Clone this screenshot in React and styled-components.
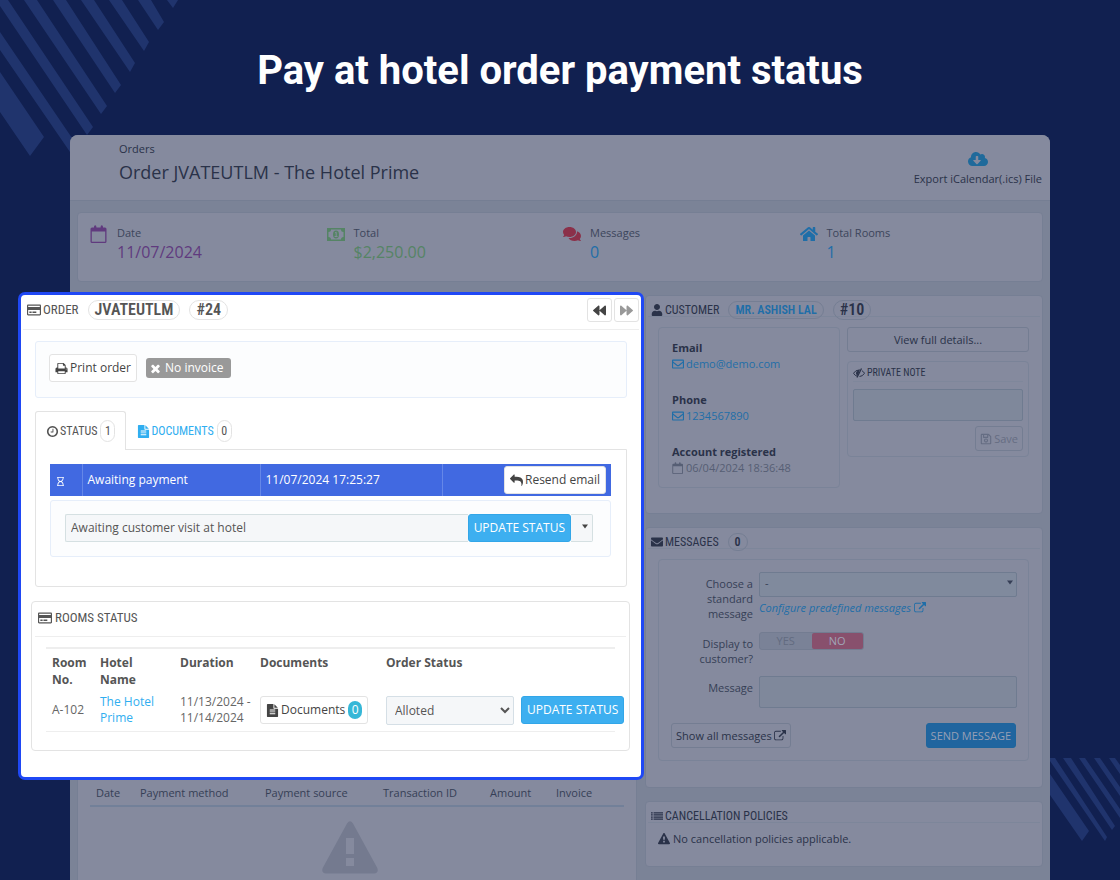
import React, { useState } from 'react';
import styled, { createGlobalStyle } from 'styled-components';
import {
  FaBackward,
  FaCloudDownloadAlt,
  FaComments,
  FaEnvelope,
  FaForward,
  FaHome,
  FaRegCreditCard,
  FaRegEnvelope,
  FaRegHourglass,
  FaRegSave,
  FaUser,
} from 'react-icons/fa';

const GlobalStyle = createGlobalStyle`
  * {
    box-sizing: border-box;
  }
  body {
    margin: 0;
    background: #112050;
    font-family: 'Open Sans', 'Noto Sans', sans-serif;
    font-size: 12px;
    line-height: 16px;
    color: #555;
  }
  button, input, select, textarea {
    font: inherit;
    margin: 0;
  }
  a {
    text-decoration: none;
  }
`;

const narrow = "'Ubuntu Condensed', 'Roboto Condensed', 'Liberation Sans Narrow', Roboto, sans-serif";

const Page = styled.div`
  position: relative;
  display: flex;
  flex-direction: column;
  min-height: 100vh;
  overflow: hidden;
`;

const Stripes = styled.svg`
  position: absolute;
  fill: #20346d;
  ${p => (p.$corner === 'top' ? 'top: 0; left: 0;' : 'bottom: 36px; right: 0;')}
`;

const Title = styled.h1`
  position: relative;
  margin: 0;
  height: 135px;
  padding-top: 47px;
  text-align: center;
  font-family: Roboto, sans-serif;
  font-size: 40px;
  line-height: 48px;
  font-weight: 700;
  color: #fff;
`;

const Shell = styled.main`
  position: relative;
  display: flex;
  flex-direction: column;
  flex: 1;
  margin: 0 70px;
  border-radius: 8px 8px 0 0;
  background: #7b8397;
  font-size: 11px;
  color: #363f56;
`;

const PageHead = styled.header`
  display: flex;
  justify-content: space-between;
  height: 66px;
  padding: 6px 8px 0 49px;
  border-bottom: 1px solid #757e93;
  border-radius: 8px 8px 0 0;
  background: #858a9e;
  color: #2a3249;
`;

const PageTitle = styled.h2`
  margin: 2px 0 0;
  font-size: 18px;
  line-height: 26px;
  font-weight: 400;
`;

const ExportLink = styled.a`
  display: flex;
  flex-direction: column;
  align-items: center;
  gap: 2px;
  padding-top: 8px;
  color: inherit;

  svg {
    font-size: 20px;
    color: #1f6a9b;
  }
`;

const Card = styled.section`
  border: 1px solid #767f94;
  border-radius: 4px;
  background: #858a9e;
`;

const Summary = styled(Card)`
  display: grid;
  grid-template-columns: repeat(4, 1fr);
  height: 70px;
  margin: 11px 7px 13px;
  padding: 12px 6px 0 12px;
`;

const Stat = styled.div`
  display: flex;
  gap: 9px;
  color: ${p => p.$color};

  > svg {
    width: 18px;
    height: 18px;
  }
`;

const StatLabel = styled.div`
  color: #3c455b;
`;

const StatValue = styled.div`
  font-size: 16px;
  line-height: 22px;
`;

const Columns = styled.div`
  display: grid;
  grid-template-columns: minmax(0, 1fr) 398px;
  gap: 8px;
  flex: 1;
  padding: 0 7px;
`;

const MainColumn = styled.div`
  display: flex;
  flex-direction: column;
`;

const SideColumn = styled.div`
  display: flex;
  flex-direction: column;
  gap: 13px;
`;

const CardHead = styled.h3`
  display: flex;
  align-items: center;
  height: 21px;
  margin: 0 2px;
  padding: 8px 0 0 3px;
  border-bottom: 1px solid #7d869a;
  font-family: ${narrow};
  font-size: 12px;
  font-weight: 400;
  color: #2a3249;

  > svg {
    margin-right: 2px;
    font-size: 12px;
  }
`;

const Badge = styled.span`
  display: inline-flex;
  align-items: center;
  justify-content: center;
  height: ${p => (p.$large ? 20 : 18)}px;
  min-width: 20px;
  margin-left: 9px;
  padding: 0 6px;
  border: 1px solid #757e93;
  border-radius: 10px;
  font-family: ${narrow};
  font-size: ${p => (p.$large ? 16 : 12)}px;
  font-weight: 600;
  color: ${p => (p.$link ? '#1f6ea8' : 'inherit')};
`;

const CustomerBody = styled.div`
  display: grid;
  grid-template-columns: 1fr 1fr;
  align-items: start;
  gap: 7px;
  padding: 10px 13px 25px 12px;
`;

const DimBox = styled.div`
  border: 1px solid #7a8398;
  border-radius: 4px;
`;

const ContactBox = styled(DimBox)`
  height: 161px;
  padding: 12px 13px;
`;

const Contact = styled.dl`
  margin: 0 0 21px;

  dt {
    font-weight: 700;
    color: #2a3249;
  }
  dd {
    display: flex;
    align-items: center;
    gap: 2px;
    height: 15px;
    margin: 0;
    color: #565e74;
  }
  a {
    color: #1f6ea8;
  }
  svg {
    width: 12px;
    height: 12px;
    color: ${p => (p.$plain ? '#565e74' : '#1f6ea8')};
  }
`;

const NoteColumn = styled.div`
  display: grid;
  gap: 9px;
`;

const DimButton = styled.button`
  display: inline-flex;
  align-items: center;
  justify-content: center;
  gap: 2px;
  height: 25px;
  padding: 0 4px;
  border: 1px solid #747d92;
  border-radius: 3px;
  background: transparent;
  white-space: nowrap;
  color: ${p => (p.disabled ? '#656d83' : '#2a3249')};

  svg {
    font-size: 12px;
  }
`;

const SendButton = styled(DimButton)`
  border-color: #1f659c;
  background: #20659f;
  color: #969fb5;
`;

const NoteBox = styled(DimBox)`
  padding: 3px 5px 5px;
  text-align: right;
`;

const NoteHead = styled.label`
  display: flex;
  align-items: center;
  gap: 2px;
  height: 17px;
  margin-bottom: 7px;
  border-bottom: 1px solid #7f879b;
  font-family: ${narrow};
  font-size: 10px;
  color: #2a3249;
`;

const DimArea = styled.textarea`
  display: block;
  width: 100%;
  height: 32px;
  padding: 4px;
  border: 1px solid #6f7b90;
  border-radius: 2px;
  background: #7f889b;
  resize: none;
`;

const NoteArea = styled(DimArea)`
  margin-bottom: 5px;
`;

const MessageForm = styled(DimBox)`
  margin: 10px 13px 26px 12px;
  padding: 12px 11px 12px 12px;
`;

const Field = styled.div`
  display: grid;
  grid-template-columns: 82px minmax(0, 1fr);
  gap: 6px;
  min-height: ${p => p.$height}px;
  line-height: 15px;
`;

const FieldLabel = styled.label`
  padding-top: 4px;
  text-align: right;
`;

const SelectWrap = styled.div`
  position: relative;

  > svg {
    position: absolute;
    top: 8px;
    right: 3px;
    pointer-events: none;
  }
`;

const DimSelect = styled.select`
  display: block;
  width: 100%;
  height: 25px;
  padding: 0 5px 4px;
  appearance: none;
  border: 1px solid #6f7b90;
  border-radius: 2px;
  background: #808a9d;
  color: #363f56;
`;

const HelpLink = styled.a`
  display: inline-flex;
  align-items: center;
  gap: 3px;
  margin-top: 3px;
  font-style: italic;
  color: #1f6ea8;

  svg {
    font-size: 12px;
  }
`;

const Switch = styled.div`
  display: flex;
  width: 105px;
  height: 18px;
  border: 1px solid #737c91;
  border-radius: 3px;
  background: #7a8297;
`;

const SwitchOption = styled.label`
  position: relative;
  flex: 1;
  border-radius: 2px;
  text-align: center;
  color: #626b80;

  input {
    position: absolute;
    inset: 0;
    width: 100%;
    height: 100%;
    opacity: 0;
  }
  &:has(input:checked) {
    background: #88506d;
    color: #a0a5b7;
  }
`;

const FormFoot = styled.div`
  display: flex;
  justify-content: space-between;
  padding-right: 1px;
`;

const Policy = styled.p`
  display: flex;
  align-items: center;
  gap: 3px;
  margin: 0;
  padding: 8px 12px 19px;
  color: #2a3249;

  svg {
    font-size: 12px;
  }
`;

/* the highlighted order panel is wider than its column */
const OrderPanel = styled.section`
  position: relative;
  z-index: 1;
  margin: -3px -7px 0 -59px;
  height: 488px;
  border: 3px solid #1f48f5;
  border-radius: 7px;
  background: #fff;
  font-size: 12px;
  color: #555;
`;

const OrderHead = styled.h3`
  display: flex;
  align-items: center;
  height: 35px;
  margin: 0 2px 11px;
  padding: 0 0 4px 4px;
  border-bottom: 1px solid #eee;
  font-family: ${narrow};
  font-size: 13px;
  font-weight: 400;

  > svg {
    margin-right: 2px;
    font-size: 14px;
  }
  ${Badge} {
    border-color: #e3e3e3;
  }
`;

const Pager = styled.div`
  display: flex;
  gap: 2px;
  margin-left: auto;
`;

const LightButton = styled.button`
  display: inline-flex;
  align-items: center;
  justify-content: center;
  gap: 2px;
  height: 28px;
  padding: 0 5px;
  border: 1px solid #e3e3e3;
  border-radius: 3px;
  background: #fff;
  white-space: nowrap;
  color: #444;

  svg {
    flex: none;
    font-size: 13px;
  }
`;

const PagerButton = styled(LightButton)`
  width: 25px;
  height: 24px;
  padding: 0;
  color: ${p => (p.disabled ? '#999' : '#444')};
`;

const PrimaryButton = styled.button`
  height: 28px;
  padding: 0 5px;
  border: 1px solid #32a6e8;
  border-radius: 3px;
  background: #3daff0;
  white-space: nowrap;
  color: #fff;
`;

const Well = styled.div`
  display: flex;
  align-items: center;
  gap: 9px;
  height: 57px;
  padding: 0 14px;
  border: 1px solid #e6eefa;
  border-radius: 3px;
  background: #fcfdfe;
`;

const ToolWell = styled(Well)`
  margin: 0 14px 13px;
  padding: 0 13px 3px;
`;

const InvoiceTag = styled.span`
  display: inline-flex;
  align-items: center;
  gap: 3px;
  height: 20px;
  padding: 0 7px 0 3px;
  border-radius: 3px;
  background: #999;
  color: #fff;

  svg {
    font-size: 13px;
  }
`;

const Tabs = styled.div`
  display: flex;
  margin: 0 14px;
`;

const Tab = styled.button`
  display: flex;
  align-items: center;
  height: 39px;
  margin-bottom: -1px;
  padding: 0 10px;
  border: 1px solid ${p => (p.$active ? '#e3e3e3' : 'transparent')};
  border-bottom: 0;
  border-radius: 3px 3px 0 0;
  background: ${p => (p.$active ? '#fff' : 'transparent')};
  font-family: ${narrow};
  font-size: 12px;
  color: ${p => (p.$active ? '#555' : '#30aef0')};
  z-index: 1;

  > svg {
    margin-right: 1px;
    font-size: 13px;
  }
`;

const Count = styled.span`
  display: inline-flex;
  align-items: center;
  justify-content: center;
  min-width: 15px;
  height: 22px;
  margin-left: 3px;
  border: 1px solid #e3e3e3;
  border-radius: 8px;
  color: #555;
`;

const TabPane = styled.div`
  height: 138px;
  margin: 0 14px 14px;
  padding: 14px 15px 0 14px;
  border: 1px solid #e3e3e3;
  border-radius: 0 0 3px 3px;
`;

const HistoryTable = styled.table`
  width: 100%;
  margin-bottom: 4px;
  border-collapse: collapse;
  table-layout: fixed;
  background: #4169e1;
  color: #fff;

  td {
    height: 32px;
    padding: 0 5px;
    border-left: 1px solid #6587e8;
  }
  td:first-child {
    width: 32px;
    border-left: 0;
  }
  td:nth-child(2) {
    width: 178px;
  }
  td:nth-child(3) {
    width: 182px;
  }
  td:last-child {
    text-align: right;
  }
  td > svg {
    display: block;
    margin: 3px 0 0 1px;
    font-size: 9px;
  }
`;

const StatusForm = styled.form`
  display: flex;
  flex: 1;
  margin: 0 3px 2px 0;
`;

const StatusSelect = styled.select`
  flex: 1;
  min-width: 0;
  height: 28px;
  padding: 0 5px;
  appearance: none;
  border: 1px solid #d5e0e2;
  border-right: 0;
  border-radius: 2px 0 0 2px;
  background: #f5f7f9;
  color: #555;
`;

const CaretButton = styled.button`
  width: 22px;
  height: 28px;
  padding: 0 0 5px 7px;
  border: 1px solid #d5e0e2;
  border-left: 0;
  border-radius: 0 2px 2px 0;
  background: #f5f7f9;
  color: #444;
`;

const RoomsCard = styled.section`
  height: 150px;
  margin: 0 11px 0 10px;
  padding: 0 3px;
  border: 1px solid #e3e3e3;
  border-radius: 4px;
`;

const RoomsHead = styled.h3`
  display: flex;
  align-items: center;
  gap: 3px;
  height: 35px;
  margin: 0 0 10px;
  padding: 0 0 2px 3px;
  border-bottom: 1px solid #eee;
  font-family: ${narrow};
  font-size: 13px;
  font-weight: 400;

  svg {
    font-size: 14px;
  }
`;

const RoomsTable = styled.table`
  width: calc(100% - 22px);
  margin-left: 11px;
  border-collapse: collapse;
  table-layout: fixed;
  border-top: 2px solid #eee;
  border-bottom: 1px solid #eee;

  th, td {
    padding: 0 0 0 6px;
    text-align: left;
  }
  th {
    height: 45px;
    padding: 5px 12px 0 6px;
    vertical-align: top;
    font-weight: 700;
    line-height: 17px;
  }
  th:first-child {
    padding-right: 0;
  }
  td {
    height: 38px;
    padding-bottom: 3px;
    color: #666;
  }
  a {
    color: #30aef0;
  }
`;

const Col = styled.col`
  width: ${p => (p.$width ? `${p.$width}px` : 'auto')};
`;

const RoomCount = styled.span`
  min-width: 14px;
  height: 18px;
  margin-left: 1px;
  border-radius: 7px;
  background: #36b7d7;
  line-height: 18px;
  color: #fff;
`;

const RoomActions = styled.div`
  display: flex;
  gap: 7px;
`;

const RoomSelect = styled.select`
  flex: none;
  width: 128px;
  height: 29px;
  padding: 0 4px;
  border: 1px solid #d5dfe6;
  border-radius: 2px;
  background: #f5f7f9;
  color: #555;
`;

const Payments = styled(Card)`
  flex: 1;
  margin-top: -4px;
  padding: 4px 12px 0;
  border-bottom: 0;
  border-radius: 0;
`;

const PaymentTable = styled.table`
  width: 100%;
  margin-bottom: 14px;
  border-collapse: collapse;
  table-layout: fixed;
  border-bottom: 2px solid #728099;

  th {
    height: 25px;
    padding: 0 0 0 6px;
    text-align: left;
    font-weight: 400;
  }
`;

const EmptyState = styled.div`
  padding-right: 14px;
  text-align: center;
`;

const ICON_PATHS = {
  print:
    'M448 1536h896v-256h-896v256zm0-640h896v-384h-160q-40 0-68-28t-28-68v-160h-640v640zm1152 64q0-26-19-45t-45-19-45 19-19 45 19 45 45 19 45-19 19-45zm128 0v416q0 13-9.5 22.5t-22.5 9.5h-224v160q0 40-28 68t-68 28h-960q-40 0-68-28t-28-68v-160h-224q-13 0-22.5-9.5t-9.5-22.5v-416q0-79 56.5-135.5t135.500-56.500h64v-544q0-40 28-68t68-28h672q40 0 88 20t76 48l152 152q28 28 48 76t20 88v256h64q79 0 135.500 56.500t56.500 135.500z',
  times:
    'M1490 1322q0 40-28 68l-136 136q-28 28-68 28t-68-28l-294-294-294 294q-28 28-68 28t-68-28l-136-136q-28-28-28-68t28-68l294-294-294-294q-28-28-28-68t28-68l136-136q28-28 68-28t68 28l294 294 294-294q28-28 68-28t68 28l136 136q28 28 28 68t-28 68l-294 294 294 294q28 28 28 68z',
  clock:
    'M1024 544v448q0 14-9 23t-23 9h-320q-14 0-23-9t-9-23v-64q0-14 9-23t23-9h224v-352q0-14 9-23t23-9h64q14 0 23 9t9 23zm416 352q0-148-73-273t-198-198-273-73-273 73-198 198-73 273 73 273 198 198 273 73 273-73 198-198 73-273zm224 0q0 209-103 385.500t-279.500 279.500-385.500 103-385.500-103-279.500-279.500-103-385.500 103-385.500 279.500-279.500 385.500-103 385.500 103 279.500 279.500 103 385.500z',
  file:
    'M1596 476q14 14 28 36h-472v-472q22 14 36 28zm-476 164h544v1056q0 40-28 68t-68 28h-1344q-40 0-68-28t-28-68v-1600q0-40 28-68t68-28h800v544q0 40 28 68t68 28zm160 736v-64q0-14-9-23t-23-9h-704q-14 0-23 9t-9 23v64q0 14 9 23t23 9h704q14 0 23-9t9-23zm0-256v-64q0-14-9-23t-23-9h-704q-14 0-23 9t-9 23v64q0 14 9 23t23 9h704q14 0 23-9t9-23zm0-256v-64q0-14-9-23t-23-9h-704q-14 0-23 9t-9 23v64q0 14 9 23t23 9h704q14 0 23-9t9-23z',
  reply:
    'M1792 1120q0 166-127 451-3 7-10.500 24t-13.500 30-13 22q-12 17-28 17-15 0-23.500-10t-8.500-25q0-9 2.500-26.500t2.500-23.500q5-68 5-123 0-101-17.500-181t-48.500-138.500-80-101-105.500-69.500-133-42.500-154-21.500-175.500-6h-224v256q0 26-19 45t-45 19-45-19l-512-512q-19-19-19-45t19-45l512-512q19-19 45-19t45 19 19 45v256h224q713 0 875 403 53 134 53 333z',
  external:
    'M1408 928v320q0 119-84.500 203.500t-203.500 84.500h-832q-119 0-203.500-84.500t-84.500-203.500v-832q0-119 84.500-203.500t203.500-84.500h704q14 0 23 9t9 23v64q0 14-9 23t-23 9h-704q-66 0-113 47t-47 113v832q0 66 47 113t113 47h832q66 0 113-47t47-113v-320q0-14 9-23t23-9h64q14 0 23 9t9 23zm384-864v512q0 26-19 45t-45 19-45-19l-176-176-652 652q-10 10-23 10t-23-10l-114-114q-10-10-10-23t10-23l652-652-176-176q-19-19-19-45t19-45 45-19h512q26 0 45 19t19 45z',
  warning:
    'M1024 1375v-190q0-14-9.500-23.500t-22.500-9.500h-192q-13 0-22.500 9.500t-9.500 23.500v190q0 14 9.500 23.500t22.500 9.500h192q13 0 22.500-9.500t9.500-23.500zm-2-374l18-459q0-12-10-19-13-11-24-11h-220q-11 0-24 11-10 7-10 21l17 457q0 10 10 16.500t24 6.500h185q14 0 23.500-6.500t10.500-16.500zm-14-934l768 1408q35 63-2 126-17 29-46.500 46t-63.500 17h-1536q-34 0-63.500-17t-46.500-46q-37-63-2-126l768-1408q17-31 47-49t65-18 65 18 47 49z',
  list:
    'M0 1280h256v192H0zM0 960h256v192H0zM0 640h256v192H0zM0 320h256v192H0zM384 1280h1408v192H384zM384 960h1408v192H384zM384 640h1408v192H384zM384 320h1408v192H384z',
};

const Icon = ({ name }) => (
  <svg viewBox="0 0 1792 1792" width="1em" height="1em" fill="currentColor" aria-hidden="true">
    <path d={ICON_PATHS[name]} />
  </svg>
);

const HiddenEye = () => (
  <svg width="12" height="12" viewBox="0 0 24 24" fill="none" stroke="currentColor" strokeWidth="2" aria-hidden="true">
    <path d="M10 19Q4 18 1 12.500 5 6 12 6h2M18 7.500q3 1.500 5 5Q19 19 13 19" />
    <path d="M17 3L8 21" strokeWidth="2.500" />
    <path d="M12 7Q7 8 7 12q0 3 2 4.500z" fill="currentColor" />
  </svg>
);

const Money = () => (
  <svg viewBox="0 0 18 18" aria-hidden="true">
    <path
      fill="currentColor"
      fillRule="evenodd"
      d="M0 3h18v13H0zM4 4.500Q4 7 1.500 7v5Q4 12 4 14.500h10Q14 12 16.500 12V7Q14 7 14 4.500z"
    />
    <ellipse cx="9" cy="9.500" rx="3" ry="4" fill="currentColor" />
    <path d="M8 8l1.200-.8v4M7.600 11.500h3" fill="none" stroke="#858a9e" />
  </svg>
);

const Caret = () => (
  <svg width="8" height="5" viewBox="0 0 8 5" fill="currentColor" aria-hidden="true">
    <path d="M1 0.500h6L4 4.500z" />
  </svg>
);

const EmptyWarning = () => (
  <svg width="56" height="53" viewBox="0 0 56 53" aria-hidden="true">
    <path
      fill="#747a8f"
      fillRule="evenodd"
      d="M25 2.500Q28-2 31 2.500L55.300 47Q57 52 52 52.500H4Q-1 52 .7 47zM24 17v16h8V17zM24 37v8h8v-8z"
    />
  </svg>
);

const CalendarMark = () => (
  <svg viewBox="0 0 18 18" aria-hidden="true">
    <path
      fill="currentColor"
      fillRule="evenodd"
      d="M2 2.500h2V2Q4 .3 5.200.3T6.400 2v.5h4.200V2q0-1.700 1.200-1.700T13 2v.5h2q1.500 0 1.500 1.500v12.500q0 1.500-1.500 1.500H2Q.5 18 .5 16.500V4Q.5 2.500 2 2.500zM1.800 6.500v10.200h13.400V6.500z"
    />
  </svg>
);

const stats = [
  { label: 'Date', value: '11/07/2024', color: '#603a7e', icon: <CalendarMark /> },
  { label: 'Total', value: '$2,250.00', color: '#558465', icon: <Money /> },
  { label: 'Messages', value: '0', color: '#1f6ea8', icon: <FaComments color="#8b3049" /> },
  { label: 'Total Rooms', value: '1', color: '#1f6ea8', icon: <FaHome /> },
];

const paymentColumns = [
  ['Date', 44],
  ['Payment method', 125],
  ['Payment source', 118],
  ['Transaction ID', 107],
  ['Amount', 66],
  ['Invoice', 0],
];

const roomColumns = [
  ['Room No.', 48],
  ['Hotel Name', 80],
  ['Duration', 80],
  ['Documents', 126],
  ['Order Status', 0],
];

function OrderDetails() {
  const [tab, setTab] = useState('status');

  return (
    <OrderPanel>
      <OrderHead>
        <FaRegCreditCard />
        ORDER
        <Badge $large>JVATEUTLM</Badge>
        <Badge $large>#24</Badge>
        <Pager>
          <PagerButton aria-label="Previous order">
            <FaBackward />
          </PagerButton>
          <PagerButton aria-label="Next order" disabled>
            <FaForward />
          </PagerButton>
        </Pager>
      </OrderHead>
      <ToolWell>
        <LightButton>
          <Icon name="print" />
          Print order
        </LightButton>
        <InvoiceTag>
          <Icon name="times" />
          No invoice
        </InvoiceTag>
      </ToolWell>
      <Tabs>
        <Tab $active={tab === 'status'} onClick={() => setTab('status')}>
          <Icon name="clock" />
          STATUS <Count>1</Count>
        </Tab>
        <Tab $active={tab === 'documents'} onClick={() => setTab('documents')}>
          <Icon name="file" />
          DOCUMENTS <Count>0</Count>
        </Tab>
      </Tabs>
      <TabPane>
        <HistoryTable>
          <tbody>
            <tr>
              <td>
                <FaRegHourglass />
              </td>
              <td>Awaiting payment</td>
              <td>11/07/2024 17:25:27</td>
              <td>
                <LightButton>
                  <Icon name="reply" />
                  Resend email
                </LightButton>
              </td>
            </tr>
          </tbody>
        </HistoryTable>
        <Well>
          <StatusForm onSubmit={e => e.preventDefault()}>
            <StatusSelect aria-label="Order status">
              <option>Awaiting customer visit at hotel</option>
            </StatusSelect>
            <PrimaryButton>UPDATE STATUS</PrimaryButton>
            <CaretButton type="button" aria-label="Show statuses">
              <Caret />
            </CaretButton>
          </StatusForm>
        </Well>
      </TabPane>
      <RoomsCard>
        <RoomsHead>
          <FaRegCreditCard />
          ROOMS STATUS
        </RoomsHead>
        <RoomsTable>
          <colgroup>
            {roomColumns.map(([name, width]) => (
              <Col key={name} $width={width} />
            ))}
          </colgroup>
          <thead>
            <tr>
              {roomColumns.map(([name]) => (
                <th key={name}>{name}</th>
              ))}
            </tr>
          </thead>
          <tbody>
            <tr>
              <td>A-102</td>
              <td>
                <a href="#hotel">The Hotel Prime</a>
              </td>
              <td>11/13/2024 - 11/14/2024</td>
              <td>
                <LightButton>
                  <Icon name="file" />
                  Documents
                  <RoomCount>0</RoomCount>
                </LightButton>
              </td>
              <td>
                <RoomActions>
                  <RoomSelect aria-label="Room status">
                    <option>Alloted</option>
                  </RoomSelect>
                  <PrimaryButton>UPDATE STATUS</PrimaryButton>
                </RoomActions>
              </td>
            </tr>
          </tbody>
        </RoomsTable>
      </RoomsCard>
    </OrderPanel>
  );
}

function Customer() {
  return (
    <Card>
      <CardHead>
        <FaUser />
        CUSTOMER
        <Badge $link>MR. ASHISH LAL</Badge>
        <Badge $large>#10</Badge>
      </CardHead>
      <CustomerBody>
        <ContactBox>
          <Contact>
            <dt>Email</dt>
            <dd>
              <FaRegEnvelope />
              <a href="#email">demo@demo.com</a>
            </dd>
          </Contact>
          <Contact>
            <dt>Phone</dt>
            <dd>
              <FaRegEnvelope />
              <a href="#phone">1234567890</a>
            </dd>
          </Contact>
          <Contact $plain>
            <dt>Account registered</dt>
            <dd>
              <CalendarMark />
              06/04/2024 18:36:48
            </dd>
          </Contact>
        </ContactBox>
        <NoteColumn>
          <DimButton>View full details...</DimButton>
          <NoteBox>
            <NoteHead htmlFor="note">
              <HiddenEye />
              PRIVATE NOTE
            </NoteHead>
            <NoteArea id="note" />
            <DimButton disabled>
              <FaRegSave />
              Save
            </DimButton>
          </NoteBox>
        </NoteColumn>
      </CustomerBody>
    </Card>
  );
}

function Messages() {
  return (
    <Card>
      <CardHead>
        <FaEnvelope />
        MESSAGES
        <Badge>0</Badge>
      </CardHead>
      <MessageForm as="form" onSubmit={e => e.preventDefault()}>
        <Field $height={60}>
          <FieldLabel htmlFor="standard">Choose a standard message</FieldLabel>
          <div>
            <SelectWrap>
              <DimSelect id="standard">
                <option>-</option>
              </DimSelect>
              <Caret />
            </SelectWrap>
            <HelpLink href="#predefined">
              Configure predefined messages
              <Icon name="external" />
            </HelpLink>
          </div>
        </Field>
        <Field $height={44}>
          <FieldLabel as="span">Display to customer?</FieldLabel>
          <Switch>
            <SwitchOption>
              <input type="radio" name="display" />
              YES
            </SwitchOption>
            <SwitchOption>
              <input type="radio" name="display" defaultChecked />
              NO
            </SwitchOption>
          </Switch>
        </Field>
        <Field $height={47}>
          <FieldLabel htmlFor="message">Message</FieldLabel>
          <DimArea id="message" />
        </Field>
        <FormFoot>
          <DimButton type="button">
            Show all messages
            <Icon name="external" />
          </DimButton>
          <SendButton>SEND MESSAGE</SendButton>
        </FormFoot>
      </MessageForm>
    </Card>
  );
}

function App() {
  return (
    <Page>
      <GlobalStyle />
      <Stripes $corner="top" width="180" height="160" aria-hidden="true">
        <path d="M0 72L44 137 30 156 0 112zM0 32L72 138 70 152 0 50zM0 0H8L93 127 87 135 0 6zM24 0H37L107 106 101 114zM53 0H66L121 85 115 93zM81 0H94L135 63 130 72zM109 0H122L149 42 144 51zM138 0H151L164 22 158 30zM167 0H178L173 8z" />
      </Stripes>
      <Stripes $corner="bottom" width="70" height="86" aria-hidden="true">
        <path d="M0 16L39 73 32 83 0 37zM0 0H5L57 79 55 83 0 3zM13 0H21L65 68 62 72zM29 0H35L70 51V60zM44 0H50L70 29V38zM59 0H65L70 7V16z" />
      </Stripes>
      <Title>Pay at hotel order payment status</Title>
      <Shell>
        <PageHead>
          <div>
            Orders
            <PageTitle>Order JVATEUTLM - The Hotel Prime</PageTitle>
          </div>
          <ExportLink href="#export">
            <FaCloudDownloadAlt />
            Export iCalendar(.ics) File
          </ExportLink>
        </PageHead>
        <Summary>
          {stats.map(stat => (
            <Stat key={stat.label} $color={stat.color}>
              {stat.icon}
              <div>
                <StatLabel>{stat.label}</StatLabel>
                <StatValue>{stat.value}</StatValue>
              </div>
            </Stat>
          ))}
        </Summary>
        <Columns>
          <MainColumn>
            <OrderDetails />
            <Payments>
              <PaymentTable>
                <colgroup>
                  {paymentColumns.map(([name, width]) => (
                    <Col key={name} $width={width} />
                  ))}
                </colgroup>
                <thead>
                  <tr>
                    {paymentColumns.map(([name]) => (
                      <th key={name}>{name}</th>
                    ))}
                  </tr>
                </thead>
              </PaymentTable>
              <EmptyState>
                <EmptyWarning />
              </EmptyState>
            </Payments>
          </MainColumn>
          <SideColumn>
            <Customer />
            <Messages />
            <Card>
              <CardHead>
                <Icon name="list" />
                CANCELLATION POLICIES
              </CardHead>
              <Policy>
                <Icon name="warning" />
                No cancellation policies applicable.
              </Policy>
            </Card>
          </SideColumn>
        </Columns>
      </Shell>
    </Page>
  );
}

export default App;
